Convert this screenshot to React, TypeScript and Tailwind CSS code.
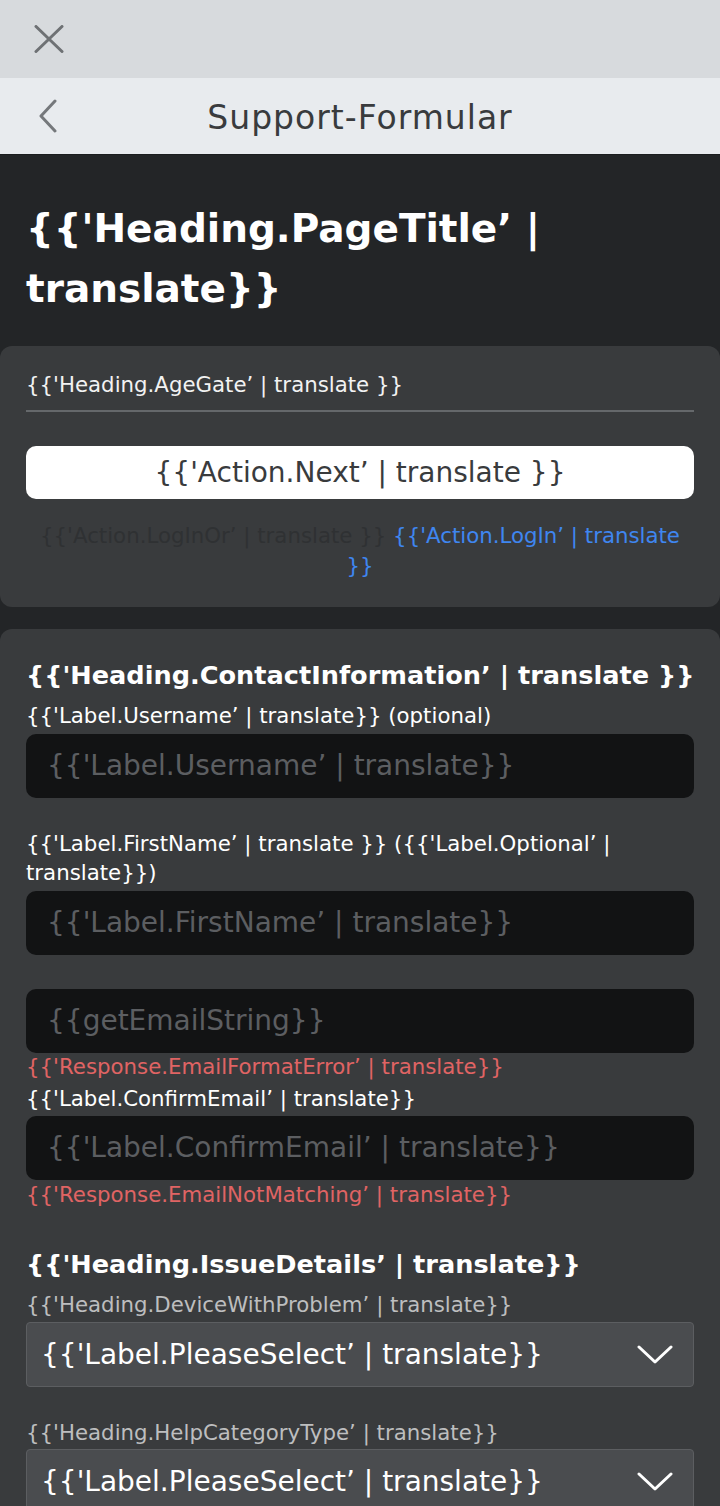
import React from "react";

const XIcon = () => (
  <svg width="30" height="28" viewBox="0 0 30 28" fill="none">
    <path d="M2 1.5 L28 26.5 M28 1.5 L2 26.5" stroke="#6e7174" strokeWidth="3" strokeLinecap="round" />
  </svg>
);

const BackIcon = () => (
  <svg width="20" height="34" viewBox="0 0 20 34" fill="none">
    <path d="M17 2 L3 17 L17 32" stroke="#75787b" strokeWidth="3" strokeLinecap="round" strokeLinejoin="round" />
  </svg>
);

const ChevronDown = () => (
  <svg width="36" height="20" viewBox="0 0 36 20" fill="none">
    <path d="M2 2 L18 17 L34 2" stroke="#ffffff" strokeWidth="3" strokeLinecap="round" strokeLinejoin="round" />
  </svg>
);

const Input = ({ placeholder }: { placeholder: string }) => (
  <div className="h-[64px] rounded-[10px] bg-[#121314] flex items-center px-[21px]">
    <span className="text-[28px] text-[#5c5e61] whitespace-nowrap">{placeholder}</span>
  </div>
);

const Select = () => (
  <div className="h-[65px] rounded-[4px] bg-[#4a4c4f] border border-[#5c5e61] flex items-center justify-between pl-[14px] pr-[20px]">
    <span className="text-[28px] text-white whitespace-nowrap">{"{{'Label.PleaseSelect’ | translate}}"}</span>
    <ChevronDown />
  </div>
);

export default function App() {
  return (
    <div className="w-[720px] min-h-[1506px] bg-[#232527] font-['DejaVu_Sans',sans-serif] overflow-hidden">
      <div className="h-[78px] bg-[#d7dadd] flex items-center pl-[34px]">
        <XIcon />
      </div>
      <div className="h-[77px] bg-[#e8ebee] grid grid-cols-[80px_1fr_80px] items-center border-b border-[#1b1d1f]">
        <div className="pl-[38px] flex items-center">
          <BackIcon />
        </div>
        <div className="text-center text-[33px] tracking-[1px] text-[#393b3d] leading-none pt-[2px]">Support-Formular</div>
        <div />
      </div>

      <div className="px-[26px] pt-[44px]">
        <h1 className="text-[39px] leading-[60px] font-bold text-white">
          {"{{'Heading.PageTitle’ | translate}}"}
        </h1>
      </div>

      <div className="mt-[27px] rounded-[12px] bg-[#393b3d] px-[26px] pt-[25px] pb-[26px]">
        <div className="text-[21.3px] leading-[28px] text-[#f2f2f2]">{"{{'Heading.AgeGate’ | translate }}"}</div>
        <div className="mt-[11px] h-[2px] bg-[#65686b]" />
        <div className="mt-[34px] h-[53px] rounded-[10px] bg-white flex items-center justify-center">
          <span className="text-[28px] text-[#393b3d]">{"{{'Action.Next’ | translate }}"}</span>
        </div>
        <p className="mt-[22px] text-center text-[21.3px] leading-[30px] px-[8px]">
          <span className="text-[#2f3133]">{"{{'Action.LogInOr’ | translate }}"}</span>{" "}
          <span className="text-[#3f86f0]">{"{{'Action.LogIn’ | translate }}"}</span>
        </p>
      </div>

      <div className="mt-[22px] rounded-t-[12px] bg-[#393b3d] px-[26px] pt-[28px] pb-[40px]">
        <h2 className="text-[25.6px] leading-[36px] font-bold text-white whitespace-nowrap">
          {"{{'Heading.ContactInformation’ | translate }}"}
        </h2>
        <div className="mt-[9px] text-[21.3px] leading-[28px] text-white">
          {"{{'Label.Username’ | translate}} (optional)"}
        </div>
        <div className="mt-[4px]">
          <Input placeholder={"{{'Label.Username’ | translate}}"} />
        </div>

        <div className="mt-[31px] text-[21.3px] leading-[29px] text-white">
          {"{{'Label.FirstName’ | translate }} ({{'Label.Optional’ | translate}})"}
        </div>
        <div className="mt-[4px]">
          <Input placeholder={"{{'Label.FirstName’ | translate}}"} />
        </div>

        <div className="mt-[34px]">
          <Input placeholder={"{{getEmailString}}"} />
        </div>
        <div className="text-[21.3px] leading-[28px] text-[#e06464]">
          {"{{'Response.EmailFormatError’ | translate}}"}
        </div>
        <div className="mt-[4px] text-[21.3px] leading-[28px] text-white">
          {"{{'Label.ConfirmEmail’ | translate}}"}
        </div>
        <div className="mt-[3px]">
          <Input placeholder={"{{'Label.ConfirmEmail’ | translate}}"} />
        </div>
        <div className="mt-[1px] text-[21.3px] leading-[28px] text-[#e06464]">
          {"{{'Response.EmailNotMatching’ | translate}}"}
        </div>

        <h2 className="mt-[37px] text-[25.6px] leading-[36px] font-bold text-white whitespace-nowrap">
          {"{{'Heading.IssueDetails’ | translate}}"}
        </h2>
        <div className="mt-[9px] text-[21.3px] leading-[28px] text-[#bdbebf]">
          {"{{'Heading.DeviceWithProblem’ | translate}}"}
        </div>
        <div className="mt-[3px]">
          <Select />
        </div>
        <div className="mt-[32px] text-[21.3px] leading-[28px] text-[#bdbebf]">
          {"{{'Heading.HelpCategoryType’ | translate}}"}
        </div>
        <div className="mt-[2px]">
          <Select />
        </div>
      </div>
    </div>
  );
}
